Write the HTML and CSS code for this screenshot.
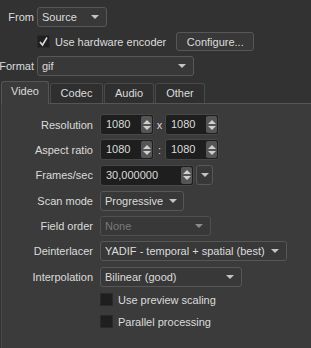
FILE: index.html
```html
<!DOCTYPE html>
<html lang="en">
<head>
    <meta charset="UTF-8">
    <title>Export - Video</title>
    <link rel="stylesheet" href="styles.css">
</head>
<body>

<!-- Top options -->
<div class="top">
    <span class="lbl">From</span>
    <div class="combo w-source"><span>Source</span><i class="arrow"></i></div>

    <span></span>
    <div class="line">
        <span class="check">
            <span class="box"><svg width="11" height="11" viewBox="0 0 11 11"><polyline points="2,6 4.5,9 9,1.5" fill="none" stroke="#d8d8d8" stroke-width="1.6"/></svg></span>
            Use hardware encoder
        </span>
        <button class="btn">Configure...</button>
    </div>

    <span class="lbl">Format</span>
    <div class="combo w-format"><span>gif</span><i class="arrow"></i></div>
</div>

<!-- Tabs -->
<div class="tabs">
    <div class="tab active">Video</div>
    <div class="tab">Codec</div>
    <div class="tab">Audio</div>
    <div class="tab">Other</div>
</div>

<!-- Video tab panel -->
<div class="panel">
    <div class="form">
        <span class="lbl">Resolution</span>
        <div class="line">
            <div class="spin"><span class="val">1080</span><span class="updown"><i class="up"></i><i class="down"></i></span></div>
            <span class="sep">x</span>
            <div class="spin"><span class="val">1080</span><span class="updown"><i class="up"></i><i class="down"></i></span></div>
        </div>

        <span class="lbl">Aspect ratio</span>
        <div class="line">
            <div class="spin"><span class="val">1080</span><span class="updown"><i class="up"></i><i class="down"></i></span></div>
            <span class="sep">:</span>
            <div class="spin"><span class="val">1080</span><span class="updown"><i class="up"></i><i class="down"></i></span></div>
        </div>

        <span class="lbl">Frames/sec</span>
        <div class="line">
            <div class="spin w-fps"><span class="val">30,000000</span><span class="updown"><i class="up"></i><i class="down"></i></span></div>
            <div class="drop"><i class="arrow"></i></div>
        </div>

        <span class="lbl">Scan mode</span>
        <div class="combo w-scan"><span>Progressive</span><i class="arrow"></i></div>

        <span class="lbl">Field order</span>
        <div class="combo w-field disabled"><span>None</span><i class="arrow"></i></div>

        <span class="lbl">Deinterlacer</span>
        <div class="combo w-deint"><span>YADIF - temporal + spatial (best)</span><i class="arrow"></i></div>

        <span class="lbl">Interpolation</span>
        <div class="combo w-interp"><span>Bilinear (good)</span><i class="arrow"></i></div>
    </div>

    <div class="checks">
        <span class="check"><span class="box"></span>Use preview scaling</span>
        <span class="check"><span class="box"></span>Parallel processing</span>
    </div>
</div>

</body>
</html>
```

FILE: styles.css
```css
body {
    margin: 0;
    padding: 0;
    background-color: #323232;
    color: #dcdcdc;
    font-family: "Liberation Sans", Arial, sans-serif;
    font-size: 11px;
    height: 348px;
    overflow: hidden;
}

/* Top section */
.top {
    display: grid;
    grid-template-columns: 34px auto;
    grid-auto-rows: 20px;
    column-gap: 3px;
    row-gap: 4.5px;
    padding-top: 7px;
    justify-items: start;
    align-items: center;
}

.lbl {
    justify-self: end;
    white-space: nowrap;
}

.line {
    display: flex;
    align-items: center;
}

/* Combo boxes */
.combo {
    box-sizing: border-box;
    height: 20px;
    display: flex;
    align-items: center;
    justify-content: space-between;
    padding: 0 7px 0 4px;
    background-color: #383838;
    border: 1px solid #575757;
    border-radius: 3px;
    white-space: nowrap;
}

.combo.disabled {
    color: #7a7a7a;
    border-color: #505050;
}

.arrow {
    width: 0;
    height: 0;
    border-left: 4px solid transparent;
    border-right: 4px solid transparent;
    border-top: 4px solid #c4c4c4;
    margin-left: 6px;
}

.disabled .arrow {
    border-top-color: #8a8a8a;
}

.w-source { width: 70px; }
.w-format { width: 157px; }
.w-scan { width: 84px; }
.w-field { width: 111px; }
.w-deint { width: 187px; }
.w-interp { width: 142px; }

/* Checkboxes */
.check {
    display: flex;
    align-items: center;
    white-space: nowrap;
}

.box {
    box-sizing: border-box;
    width: 13px;
    height: 13px;
    margin-right: 5px;
    background-color: #1f1f1f;
    border: 1px solid #2a2a2a;
    display: flex;
    align-items: center;
    justify-content: center;
}

.btn {
    box-sizing: border-box;
    height: 19px;
    width: 78px;
    margin-left: 10px;
    padding: 0;
    background-color: #383838;
    color: #dcdcdc;
    border: 1px solid #575757;
    border-radius: 3px;
    font-family: inherit;
    font-size: 11px;
}

/* Tabs */
.tabs {
    display: flex;
    align-items: flex-end;
    gap: 1px;
    margin-top: 5px;
    padding-left: 1px;
    height: 22px;
}

.tab {
    box-sizing: border-box;
    height: 20px;
    padding-top: 3px;
    text-align: center;
    background-color: #2f2f2f;
    border: 1px solid #494949;
    border-bottom: none;
    border-radius: 3px 3px 0 0;
    width: 53px;
}

.tab:nth-child(3),
.tab:nth-child(4) {
    width: 50px;
}

.tab.active {
    width: 48px;
    height: 23px;
    margin-bottom: -1px;
    padding-top: 3px;
    background-color: #3b3b3b;
    border-color: #555555;
    position: relative;
}

/* Panel */
.panel {
    margin-left: 1px;
    height: 244px;
    background-color: #3b3b3b;
    border-top: 1px solid #555555;
    border-left: 1px solid #4a4a4a;
    padding-top: 10px;
}

.form {
    display: grid;
    grid-template-columns: 91px auto;
    grid-auto-rows: 21px;
    column-gap: 7px;
    row-gap: 4.4px;
    justify-items: start;
    align-items: center;
}

/* Spin boxes */
.spin {
    box-sizing: border-box;
    width: 54px;
    height: 21px;
    display: flex;
    background-color: #1e1e1e;
    border: 1px solid #474747;
    border-radius: 3px;
}

.spin.w-fps {
    width: 94px;
}

.val {
    flex: 1;
    padding-left: 5px;
    line-height: 19px;
}

.updown {
    width: 11px;
    margin: 1px;
    background-color: #555555;
    border-radius: 2px;
    display: flex;
    flex-direction: column;
    align-items: center;
    justify-content: center;
    gap: 2px;
}

.updown .up,
.updown .down {
    width: 0;
    height: 0;
    border-left: 4px solid transparent;
    border-right: 4px solid transparent;
}

.updown .up {
    border-bottom: 4px solid #cfcfcf;
}

.updown .down {
    border-top: 4px solid #cfcfcf;
}

.sep {
    width: 11px;
    text-align: center;
}

.drop {
    box-sizing: border-box;
    width: 17px;
    height: 20px;
    margin-left: 2px;
    display: flex;
    align-items: center;
    justify-content: center;
    background-color: #383838;
    border: 1px solid #575757;
    border-radius: 3px;
}

.drop .arrow {
    margin-left: 0;
}

.checks {
    display: flex;
    flex-direction: column;
    gap: 9px;
    padding-left: 98px;
    margin-top: 6px;
}
```
